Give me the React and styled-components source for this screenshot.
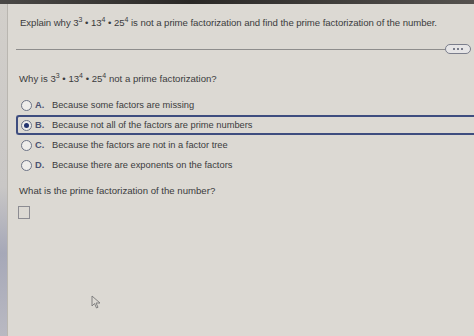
import React from 'react';
import styled, {createGlobalStyle} from 'styled-components';

const GlobalStyle = createGlobalStyle`
html, body {
  margin:0;
  padding:0;
  background:#dcd9d3;
}
body {
  font-family:"Liberation Sans", Arial, sans-serif;
  color:#3b3b3d;
}
`;

const Screen = styled.div`
width:474px;
height:336px;
overflow:hidden;
display:flex;
flex-direction:column;
background:#dcd9d3;
`;

const TopBar = styled.div`
height:4px;
flex:none;
background:linear-gradient(to right, #4a4846, #2a2826 40%, #55524f);
`;

const Body = styled.div`
flex:1;
display:flex;
`;

const SideStrip = styled.div`
width:7px;
flex:none;
border-right:1px solid #b9b6b0;
background:linear-gradient(to bottom, #d2cfca 0%, #c9c7c6 55%, #a6a8b8 75%, #b9b9c2 100%);
`;

const Content = styled.div`
flex:1;
display:flex;
flex-direction:column;
padding-left:12px;
font-size:9.6px;
`;

const Title = styled.p`
margin:13px 0 0 0;
line-height:12px;
white-space:nowrap;
letter-spacing:-0.05px;
`;

const DividerRow = styled.div`
display:flex;
align-items:center;
margin:15px 0 0 -4px;
`;

const Rule = styled.div`
flex:1;
height:1px;
background:#8e8d8c;
`;

const MoreButton = styled.div`
width:24px;
height:8px;
border:1px solid #7b7e8c;
border-radius:5px;
background:#e6e5e6;
display:flex;
align-items:center;
justify-content:center;
gap:2px;
margin-right:3px;
`;

const Dot = styled.span`
width:2px;
height:2px;
border-radius:50%;
background:#55596b;
`;

const Question = styled.p`
margin:19px 0 0 -1px;
line-height:12px;
`;

const Options = styled.div`
display:flex;
flex-direction:column;
margin-top:10px;
margin-left:-4px;
font-size:9.3px;
`;

const Option = styled.div`
display:flex;
align-items:center;
height:20px;
padding-left:3px;
border:2px solid ${props=>props.selected ? '#3e4d7f' : 'transparent'};
border-right:none;
border-radius:3px 0 0 3px;
box-sizing:border-box;
`;

const Radio = styled.span`
width:9px;
height:9px;
border-radius:50%;
border:1px solid #6c7386;
background:#eeedeb;
display:flex;
align-items:center;
justify-content:center;
flex:none;
&::after {
  content:"";
  width:5px;
  height:5px;
  border-radius:50%;
  background:${props=>props.checked ? '#24346f' : 'transparent'};
}
`;

const Letter = styled.span`
margin-left:3px;
width:17px;
font-weight:700;
color:#4b5170;
`;

const OptionText = styled.span`
white-space:nowrap;
`;

const Prompt = styled.p`
margin:10px 0 0 -1px;
line-height:12px;
`;

const AnswerBox = styled.div`
width:10px;
height:11px;
border:1px solid #8c8c92;
margin:9px 0 0 -2px;
`;

const Pointer = styled.svg`
margin:76px 0 0 71px;
`;

const Sup = styled.sup`
font-size:7px;
line-height:0;
`;

const Expr = () => (
  <>3<Sup>3</Sup> • 13<Sup>4</Sup> • 25<Sup>4</Sup></>
);

const choices = [
  {letter:'A.', text:'Because some factors are missing'},
  {letter:'B.', text:'Because not all of the factors are prime numbers'},
  {letter:'C.', text:'Because the factors are not in a factor tree'},
  {letter:'D.', text:'Because there are exponents on the factors'},
];

const App = () => {
  const selected = 1;
  return (
    <Screen>
      <GlobalStyle/>
      <TopBar/>
      <Body>
        <SideStrip/>
        <Content>
          <Title>Explain why <Expr/> is not a prime factorization and find the prime factorization of the number.</Title>
          <DividerRow>
            <Rule/>
            <MoreButton><Dot/><Dot/><Dot/></MoreButton>
          </DividerRow>
          <Question>Why is <Expr/> not a prime factorization?</Question>
          <Options>
            {choices.map((c, i) => (
              <Option key={c.letter} selected={i===selected}>
                <Radio checked={i===selected}/>
                <Letter>{c.letter}</Letter>
                <OptionText>{c.text}</OptionText>
              </Option>
            ))}
          </Options>
          <Prompt>What is the prime factorization of the number?</Prompt>
          <AnswerBox/>
          <Pointer width="11" height="14" viewBox="0 0 11 14">
            <path d="M1 1 L1 11 L3.5 8.5 L5.5 13 L7 12.3 L5 8 L9 8 Z" fill="none" stroke="#777" strokeWidth="0.9" strokeLinejoin="round"/>
          </Pointer>
        </Content>
      </Body>
    </Screen>
  );
};

export default App;
